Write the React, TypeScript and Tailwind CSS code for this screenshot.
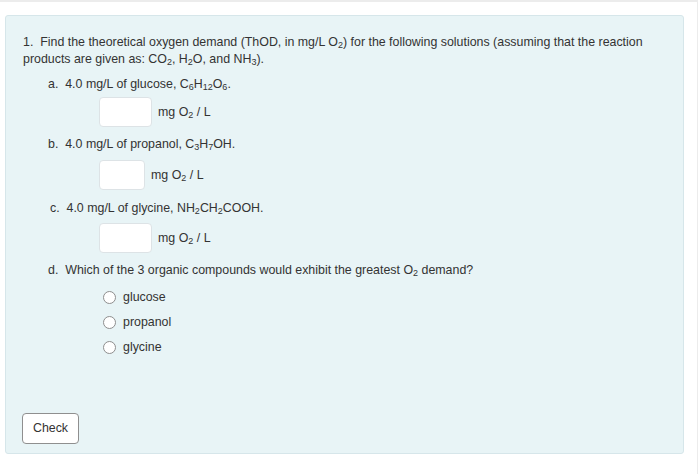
import React from "react";

const Sub = ({ children }: { children: React.ReactNode }) => (
  <sub className="text-[9px]">{children}</sub>
);

const Box = ({ w }: { w: string }) => (
  <div className={`${w} h-[30px] bg-white border border-[#dde3e6] rounded-[4px]`} />
);

const Unit = () => (
  <span>
    mg O<Sub>2</Sub> / L
  </span>
);

const Radio = ({ label }: { label: string }) => (
  <div className="flex items-center h-[17px] ml-[80px]">
    <span className="w-[13px] h-[13px] rounded-full border border-[#8e8e8e] bg-white" />
    <span className="ml-[7px]">{label}</span>
  </div>
);

export default function App() {
  return (
    <div
      className="w-[700px] h-[474px] bg-white relative text-[12.4px] leading-[17px] text-[#333]"
      style={{ fontFamily: '"Liberation Sans", Arial, sans-serif' }}
    >
      <div className="absolute left-0 top-0 w-[698px] h-[474px] border-t-2 border-r border-[#ececec]" />
      <div className="relative pt-[15px] pl-[5px]">
        <div className="w-[679px] h-[439px] bg-[#e8f4f6] border border-[#d6e6ea] rounded-[3px] pt-[18px] pl-[17px] flex flex-col">
          <p>
            1.&nbsp; Find the theoretical oxygen demand (ThOD, in mg/L O<Sub>2</Sub>) for the following solutions (assuming that the reaction
            <br />
            products are given as: CO<Sub>2</Sub>, H<Sub>2</Sub>O, and NH<Sub>3</Sub>).
          </p>
          <p className="mt-[8px] ml-[25px]">
            a.&nbsp; 4.0 mg/L of glucose, C<Sub>6</Sub>H<Sub>12</Sub>O<Sub>6</Sub>.
          </p>
          <div className="mt-[4px] ml-[76px] flex items-center gap-[6px]">
            <Box w="w-[53px]" />
            <Unit />
          </div>
          <p className="mt-[9px] ml-[25px]">
            b.&nbsp; 4.0 mg/L of propanol, C<Sub>3</Sub>H<Sub>7</Sub>OH.
          </p>
          <div className="mt-[7px] ml-[76px] flex items-center gap-[6px]">
            <Box w="w-[46px]" />
            <Unit />
          </div>
          <p className="mt-[10px] ml-[27px]">
            c.&nbsp; 4.0 mg/L of glycine, NH<Sub>2</Sub>CH<Sub>2</Sub>COOH.
          </p>
          <div className="mt-[6px] ml-[76px] flex items-center gap-[6px]">
            <Box w="w-[53px]" />
            <Unit />
          </div>
          <p className="mt-[9px] ml-[25px]">
            d.&nbsp; Which of the 3 organic compounds would exhibit the greatest O<Sub>2</Sub> demand?
          </p>
          <div className="mt-[10px] flex flex-col gap-[8px]">
            <Radio label="glucose" />
            <Radio label="propanol" />
            <Radio label="glycine" />
          </div>
          <div className="mt-[57px]">
            <button className="w-[57px] h-[31px] bg-white border border-[#8f8f8f] rounded-[4px] text-[12.4px] text-[#333] -translate-x-px">
              Check
            </button>
          </div>
        </div>
      </div>
    </div>
  );
}
